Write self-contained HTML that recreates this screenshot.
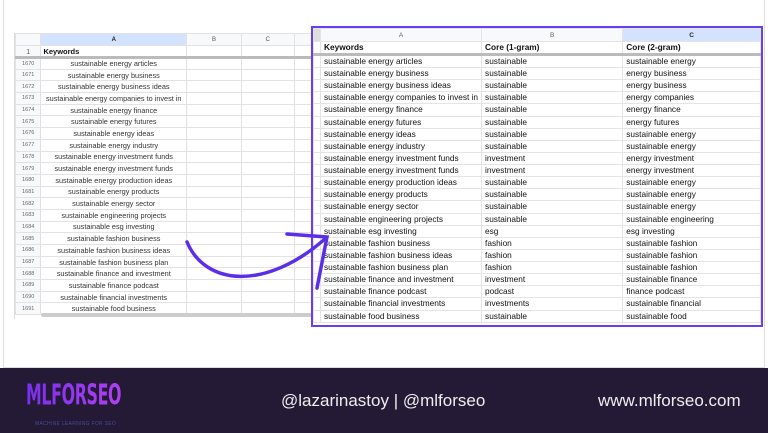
<!DOCTYPE html>
<html><head><style>
*{margin:0;padding:0;box-sizing:border-box}
body{width:768px;height:433px;background:#fff;position:relative;overflow:hidden;font-family:"Liberation Sans",sans-serif}
.frame{position:absolute;left:3px;top:0;width:762px;height:368px;border:1px solid #ddd;border-top:none}
.L{position:absolute;left:14px;top:33px;width:300px;height:286px;overflow:hidden;border-left:1px solid #ddd}
.L table,.R table{border-collapse:collapse;table-layout:fixed}
.L td{border:1px solid #e2e2e2;font-size:7.3px;color:#333;text-align:center;height:11.7px;padding:0;white-space:nowrap;overflow:hidden}
.L td.n{font-size:5.5px;color:#666;background:#f8f9fa}
.L tr.h td{background:#f8f9fa;font-size:6px;color:#555;height:12px}
.L tr.h td.sel{background:#d3e3fd;color:#222;font-weight:bold}
.L tr.k td{height:12px;font-size:7.5px}
.R{position:absolute;left:311px;top:26px;width:452px;height:301px;border:2px solid #6a3df0;overflow:hidden;background:#fff}
.R td{border:1px solid #e4e4e4;font-size:8.3px;color:#111;height:12.14px;padding:0 3px;white-space:nowrap;overflow:hidden;line-height:11px}
.R tr.h td{background:#f8f9fa;font-size:6.5px;color:#666;text-align:center;height:13px}
.R tr.h td.sel{background:#d3e3fd;color:#222;font-weight:bold}
.R tr.k td{font-weight:bold;height:13px}
.thick td{border-bottom:3px solid #bbb!important}
.foot{position:absolute;left:0;top:368px;width:768px;height:65px;background:#241a35}
.logo{position:absolute;left:26px;top:12px;font-family:"DejaVu Sans",sans-serif;font-weight:bold;font-size:22px;letter-spacing:-0.5px;background:linear-gradient(90deg,#7a2ff0,#b040f0);-webkit-background-clip:text;background-clip:text;color:transparent;transform:scale(0.72,1.3);transform-origin:top left;white-space:nowrap}
.tag{position:absolute;left:35px;top:53px;font-size:5px;color:#4a4a9a;letter-spacing:.3px}
.t1{position:absolute;left:281px;top:23px;font-size:17px;color:#eee}
.t2{position:absolute;left:598px;top:23px;font-size:17px;color:#eee}
</style></head><body>
<div class="frame"></div>
<div class="L"><table>
<colgroup><col style="width:26px"><col style="width:146px"><col style="width:57px"><col style="width:55px"><col style="width:20px"></colgroup>
<tr class="h"><td></td><td class="sel">A</td><td>B</td><td>C</td><td></td></tr>
<tr class="k thick"><td class="n">1</td><td style="text-align:left;font-weight:bold;padding-left:2px;color:#111">Keywords</td><td></td><td></td><td></td></tr>
<tr><td class="n" style="height:8px">1670</td><td style="height:8px;line-height:4px">sustainable energy articles</td><td></td><td></td><td></td></tr>
<tr><td class="n">1671</td><td>sustainable energy business</td><td></td><td></td><td></td></tr>
<tr><td class="n">1672</td><td>sustainable energy business ideas</td><td></td><td></td><td></td></tr>
<tr><td class="n">1673</td><td>sustainable energy companies to invest in</td><td></td><td></td><td></td></tr>
<tr><td class="n">1674</td><td>sustainable energy finance</td><td></td><td></td><td></td></tr>
<tr><td class="n">1675</td><td>sustainable energy futures</td><td></td><td></td><td></td></tr>
<tr><td class="n">1676</td><td>sustainable energy ideas</td><td></td><td></td><td></td></tr>
<tr><td class="n">1677</td><td>sustainable energy industry</td><td></td><td></td><td></td></tr>
<tr><td class="n">1678</td><td>sustainable energy investment funds</td><td></td><td></td><td></td></tr>
<tr><td class="n">1679</td><td>sustainable energy investment funds</td><td></td><td></td><td></td></tr>
<tr><td class="n">1680</td><td>sustainable energy production ideas</td><td></td><td></td><td></td></tr>
<tr><td class="n">1681</td><td>sustainable energy products</td><td></td><td></td><td></td></tr>
<tr><td class="n">1682</td><td>sustainable energy sector</td><td></td><td></td><td></td></tr>
<tr><td class="n">1683</td><td>sustainable engineering projects</td><td></td><td></td><td></td></tr>
<tr><td class="n">1684</td><td>sustainable esg investing</td><td></td><td></td><td></td></tr>
<tr><td class="n">1685</td><td>sustainable fashion business</td><td></td><td></td><td></td></tr>
<tr><td class="n">1686</td><td>sustainable fashion business ideas</td><td></td><td></td><td></td></tr>
<tr><td class="n">1687</td><td>sustainable fashion business plan</td><td></td><td></td><td></td></tr>
<tr><td class="n">1688</td><td>sustainable finance and investment</td><td></td><td></td><td></td></tr>
<tr><td class="n">1689</td><td>sustainable finance podcast</td><td></td><td></td><td></td></tr>
<tr><td class="n">1690</td><td>sustainable financial investments</td><td></td><td></td><td></td></tr>
<tr><td class="n">1691</td><td>sustainable food business</td><td></td><td></td><td></td></tr>
</table>
<div style="position:absolute;left:26px;top:280px;width:280px;height:4px;background:#ccc;border-radius:2px"></div>
</div>
<div class="R"><table>
<colgroup><col style="width:4px"><col style="width:150px"><col style="width:151px"><col style="width:143px"></colgroup>
<tr class="h"><td style="padding:0;background:#ddd"></td><td>A</td><td>B</td><td class="sel">C</td></tr>
<tr class="k thick"><td style="padding:0"></td><td>Keywords</td><td>Core (1-gram)</td><td>Core (2-gram)</td></tr>
<tr><td></td><td>sustainable energy articles</td><td>sustainable</td><td>sustainable energy</td></tr>
<tr><td></td><td>sustainable energy business</td><td>sustainable</td><td>energy business</td></tr>
<tr><td></td><td>sustainable energy business ideas</td><td>sustainable</td><td>energy business</td></tr>
<tr><td></td><td>sustainable energy companies to invest in</td><td>sustainable</td><td>energy companies</td></tr>
<tr><td></td><td>sustainable energy finance</td><td>sustainable</td><td>energy finance</td></tr>
<tr><td></td><td>sustainable energy futures</td><td>sustainable</td><td>energy futures</td></tr>
<tr><td></td><td>sustainable energy ideas</td><td>sustainable</td><td>sustainable energy</td></tr>
<tr><td></td><td>sustainable energy industry</td><td>sustainable</td><td>sustainable energy</td></tr>
<tr><td></td><td>sustainable energy investment funds</td><td>investment</td><td>energy investment</td></tr>
<tr><td></td><td>sustainable energy investment funds</td><td>investment</td><td>energy investment</td></tr>
<tr><td></td><td>sustainable energy production ideas</td><td>sustainable</td><td>sustainable energy</td></tr>
<tr><td></td><td>sustainable energy products</td><td>sustainable</td><td>sustainable energy</td></tr>
<tr><td></td><td>sustainable energy sector</td><td>sustainable</td><td>sustainable energy</td></tr>
<tr><td></td><td>sustainable engineering projects</td><td>sustainable</td><td>sustainable engineering</td></tr>
<tr><td></td><td>sustainable esg investing</td><td>esg</td><td>esg investing</td></tr>
<tr><td></td><td>sustainable fashion business</td><td>fashion</td><td>sustainable fashion</td></tr>
<tr><td></td><td>sustainable fashion business ideas</td><td>fashion</td><td>sustainable fashion</td></tr>
<tr><td></td><td>sustainable fashion business plan</td><td>fashion</td><td>sustainable fashion</td></tr>
<tr><td></td><td>sustainable finance and investment</td><td>investment</td><td>sustainable finance</td></tr>
<tr><td></td><td>sustainable finance podcast</td><td>podcast</td><td>finance podcast</td></tr>
<tr><td></td><td>sustainable financial investments</td><td>investments</td><td>sustainable financial</td></tr>
<tr><td></td><td>sustainable food business</td><td>sustainable</td><td>sustainable food</td></tr>
</table></div>
<svg style="position:absolute;left:0;top:0" width="768" height="368">
<g fill="none" stroke="#5b2ee8" stroke-width="3.5" stroke-linecap="round">
<path d="M187 242 C205 285 265 292 326 238"/>
<path d="M287 234 L327 237 L317 288"/>
</g></svg>
<div class="foot">
<div class="logo">MLFORSEO</div>
<div class="tag">MACHINE LEARNING FOR SEO</div>
<div class="t1">@lazarinastoy | @mlforseo</div>
<div class="t2">www.mlforseo.com</div>
</div>
</body></html>
